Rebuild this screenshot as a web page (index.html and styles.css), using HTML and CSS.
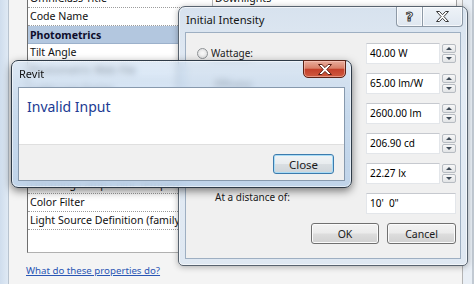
FILE: index.html
```html
<!DOCTYPE html>
<html>
<head>
<meta charset="utf-8">
<link rel="stylesheet" href="styles.css">
</head>
<body>
<div class="app">
  <div class="side"></div>
  <div class="panel">
    <div class="grid">
      <div class="row"><div class="name">OmniClass Title</div><div class="val">Downlights</div></div>
      <div class="row"><div class="name">Code Name</div><div class="val"></div></div>
      <div class="group">Photometrics</div>
      <div class="row"><div class="name">Tilt Angle</div><div class="val"></div></div>
      <div class="row tall"><div class="name">Photometric Web File</div><div class="val"></div></div>
      <div class="row tall"><div class="name">Light Loss Factor</div><div class="val"></div></div>
      <div class="row tall"><div class="name">Initial Intensity</div><div class="val"></div></div>
      <div class="row tall"><div class="name">Initial Color</div><div class="val"></div></div>
      <div class="row tall"><div class="name">Light Source Symbol Size</div><div class="val"></div></div>
      <div class="row tall"><div class="name">Emit from Line Length</div><div class="val"></div></div>
      <div class="row"><div class="name">Dimming Lamp Color Temperature Shift</div><div class="val"></div></div>
      <div class="row"><div class="name">Color Filter</div><div class="val"></div></div>
      <div class="row"><div class="name">Light Source Definition (family)</div><div class="val"></div></div>
      <div class="row empty"></div>
    </div>
    <a class="help" href="#">What do these properties do?</a>
  </div>
  <div class="rframe"></div>
</div>

<div class="win intensity">
  <div class="tbar">
    <span class="title">Initial Intensity</span>
    <div class="capbtns">
      <span class="cb help-btn">?</span>
      <span class="cb x-btn"><svg width="13" height="11" viewBox="0 0 13 11"><path d="M0.5 0.5h3l3 3.2 3-3.2h3l-4.6 5 4.6 5h-3l-3-3.2-3 3.2h-3l4.6-5z" fill="#fff" stroke="#3a3a3a" stroke-width="1"/></svg></span>
    </div>
  </div>
  <div class="client">
    <div class="frow">
      <div class="lab"><span class="radio"></span><span class="focus">Wattage:</span></div>
      <div class="inp">40.00 W</div>
      <div class="spin"><span class="sb up"></span><span class="sb dn"></span></div>
    </div>
    <div class="frow">
      <div class="lab ind">Efficacy:</div>
      <div class="inp">65.00 lm/W</div>
      <div class="spin"><span class="sb up"></span><span class="sb dn"></span></div>
    </div>
    <div class="frow">
      <div class="lab"><span class="radio"></span>Luminous Flux:</div>
      <div class="inp">2600.00 lm</div>
      <div class="spin"><span class="sb up"></span><span class="sb dn"></span></div>
    </div>
    <div class="frow">
      <div class="lab"><span class="radio"></span>Luminous Intensity:</div>
      <div class="inp">206.90 cd</div>
      <div class="spin"><span class="sb up"></span><span class="sb dn"></span></div>
    </div>
    <div class="frow">
      <div class="lab"><span class="radio"></span>Illuminance:</div>
      <div class="inp">22.27 lx</div>
      <div class="spin"><span class="sb up"></span><span class="sb dn"></span></div>
    </div>
    <div class="frow dist">
      <div class="lab ind top">At a distance of:</div>
      <div class="inp wide">10'&nbsp; 0"</div>
    </div>
    <div class="btns">
      <span class="btn">OK</span>
      <span class="btn cancel">Cancel</span>
    </div>
  </div>
</div>

<div class="win revit">
  <div class="tbar">
    <span class="title">Revit</span>
    <span class="redx"><svg width="14" height="11" viewBox="0 0 14 11"><path d="M0.5 0.5h3.4l3.1 3.1 3.1-3.1h3.4l-4.7 5 4.7 5h-3.4l-3.1-3.1-3.1 3.1h-3.4l4.7-5z" fill="#fff" stroke="#5a1d12" stroke-width="1"/></svg></span>
  </div>
  <div class="client">
    <div class="msg">Invalid Input</div>
    <div class="foot"><span class="btn def">Close</span></div>
  </div>
</div>
</body>
</html>
```

FILE: styles.css
```css
* { box-sizing: border-box; margin: 0; padding: 0; }
html, body { width: 474px; height: 284px; overflow: hidden; }
body {
  font-family: "Noto Sans", "Open Sans", sans-serif;
  font-size: 11px;
  color: #000;
  background: #f0f0f0;
  position: relative;
}

/* background property window */
.app { display: flex; height: 284px; }
.side {
  width: 9px;
  background: linear-gradient(90deg, #cfdded, #dfe9f4);
  border-right: 1px solid #b8c3cf;
}
.panel {
  flex: 1;
  background: #f4f4f4;
  padding-left: 18px;
  padding-right: 5px;
  border-right: 1px solid #b4b4b4;
  display: flex;
  flex-direction: column;
}
.rframe {
  width: 11px;
  background: #e9eff6;
  border-right: 2px solid #c2cad3;
}
.grid {
  margin-top: -10px;
  background: #fff;
  border-left: 1px solid #6e6e6e;
  border-right: 1px solid #a3a3a3;
  border-bottom: 1px solid #b0b0b0;
}
.row {
  display: flex;
  height: 18px;
  border-bottom: 1px dotted #9c9c9c;
}
.row.tall { height: 19px; }
.row.empty { height: 22px; border-bottom: none; }
.name {
  width: 185px;
  border-right: 1px solid #b8b8b8;
  padding-left: 2px;
  line-height: 17px;
  font-size: 10.6px;
  white-space: nowrap;
  overflow: hidden;
  color: #111;
}
.val { flex: 1; padding-left: 2px; line-height: 17px; font-size: 10.6px; color: #111; }
.group {
  height: 18px;
  background: #b3c7df;
  border-bottom: 1px solid #9cb1cb;
  font-weight: bold;
  font-size: 10.6px;
  padding-left: 2px;
  line-height: 18px;
  color: #0d0d2b;
}
.help {
  margin-top: 10px;
  margin-left: -1px;
  line-height: 16px;
  font-size: 9.7px;
  color: #2a56b4;
  text-decoration: underline;
}

/* windows */
.win {
  position: absolute;
  display: flex;
  flex-direction: column;
  border: 1px solid #58636f;
  border-radius: 7px 7px 5px 5px;
}
.tbar {
  position: relative;
  display: flex;
  align-items: center;
  padding-left: 7px;
  flex: none;
}
.title { font-size: 11px; color: #141414; }
.client {
  flex: 1;
  margin: 0 6px 6px;
  border: 1px solid #9eafc2;
  background: #f0f0f0;
  display: flex;
  flex-direction: column;
}

/* Initial Intensity */
.intensity {
  left: 178px;
  top: 6px;
  width: 290px;
  height: 260px;
  background: linear-gradient(#d7e2ee, #e4ecf5 30%, #dfe8f2);
  box-shadow: 0 1px 6px rgba(0, 0, 0, 0.3), inset 0 0 0 1px rgba(255, 255, 255, 0.6);
}
.intensity .tbar { height: 25px; }
.intensity .title { font-size: 11.2px; }
.capbtns {
  position: absolute;
  right: 4px;
  top: 0;
  display: flex;
}
.cb {
  height: 20px;
  display: flex;
  align-items: center;
  justify-content: center;
  border: 1px solid #8d99a6;
  border-top: none;
  background: linear-gradient(#eef3f8, #dfe7f0);
  box-shadow: inset 0 0 0 1px rgba(255, 255, 255, 0.7);
}
.help-btn {
  width: 27px;
  border-radius: 0 0 0 4px;
  font-family: "DejaVu Sans", sans-serif;
  font-weight: bold;
  font-size: 13px;
  color: #fff;
  -webkit-text-stroke: 1px #3a3a3a;
}
.x-btn {
  width: 40px;
  border-left: none;
  border-radius: 0 0 4px 0;
}
.intensity .client { padding: 10px 4px 0 0; }
.frow {
  display: flex;
  align-items: center;
  height: 21px;
  margin-bottom: 9px;
}
.lab {
  flex: 1;
  display: flex;
  align-items: center;
  padding-left: 11px;
  white-space: nowrap;
  font-size: 10px;
  color: #1a1a1a;
}
.lab.ind { padding-left: 29px; }
.lab.top { align-self: flex-start; margin-top: -3px; }
.radio {
  width: 11px;
  height: 11px;
  border-radius: 50%;
  border: 1px solid #8f9396;
  background: radial-gradient(circle at 50% 50%, #f6f6f6 20%, #d7d8d9);
  margin-right: 3px;
}
.focus { border-bottom: 1px dotted #555; line-height: 13px; }
.inp {
  width: 74px;
  height: 21px;
  background: #fff;
  border: 1px solid #e3e6ea;
  border-top-color: #c6c9cf;
  padding-left: 3px;
  line-height: 19px;
  font-size: 10px;
  white-space: nowrap;
}
.inp.wide { width: 90px; }
.spin {
  width: 14px;
  height: 21px;
  margin-left: 2px;
  display: flex;
  flex-direction: column;
  justify-content: space-between;
  padding: 1px 0;
}
.sb {
  height: 9px;
  border: 1px solid #b7bcc2;
  border-radius: 2px;
  background: linear-gradient(#f7f7f7, #e2e4e6);
  display: flex;
  align-items: center;
  justify-content: center;
}
.sb::after {
  content: "";
  border-left: 3px solid transparent;
  border-right: 3px solid transparent;
}
.sb.up::after { border-bottom: 3px solid #3e4a57; }
.sb.dn::after { border-top: 3px solid #3e4a57; }
.btns {
  display: flex;
  justify-content: flex-end;
  gap: 8px;
  margin-top: 0;
}
.btn {
  width: 68px;
  height: 21px;
  display: flex;
  align-items: center;
  justify-content: center;
  border: 1px solid #707070;
  border-radius: 3px;
  background: linear-gradient(#f3f3f3, #ebebeb 48%, #dddddd 52%, #d1d1d1);
  box-shadow: inset 0 0 0 1px #fbfbfb;
  font-size: 10.5px;
  color: #1a1a1a;
}
.btn.cancel { width: 69px; }

/* Revit message box */
.revit {
  left: 11px;
  top: 60px;
  width: 341px;
  height: 128px;
  border-color: #2f3b48;
  border-radius: 7px;
  background: linear-gradient(rgba(205, 223, 243, 0.6), rgba(188, 211, 235, 0.78) 40%, rgba(186, 208, 232, 0.9));
  -webkit-backdrop-filter: blur(3px);
  backdrop-filter: blur(3px);
  box-shadow: 0 3px 9px rgba(0, 0, 0, 0.5), inset 0 0 0 1px rgba(255, 255, 255, 0.55);
}
.revit .tbar { height: 26px; }
.revit .title { color: #111; margin-top: -1px; }
.redx {
  position: absolute;
  right: 5px;
  top: -1px;
  width: 43px;
  height: 18px;
  border: 1px solid #5b2216;
  border-radius: 0 0 5px 5px;
  background: linear-gradient(#e9ad9d, #d98069 45%, #c4402a 52%, #cf5a3f);
  box-shadow: inset 0 0 0 1px rgba(255, 210, 200, 0.5);
  display: flex;
  align-items: center;
  justify-content: center;
}
.revit .client { border-color: #8799ad; }
.msg {
  height: 56px;
  background: #fff;
  padding: 9px 0 0 8px;
  font-size: 14px;
  line-height: 20px;
  color: #203a93;
}
.foot {
  flex: 1;
  border-top: 1px solid #dfdfdf;
  display: flex;
  justify-content: flex-end;
  padding: 9px 10px 0 0;
}
.btn.def {
  width: 61px;
  height: 20px;
  border-color: #3d7bad;
  box-shadow: inset 0 0 0 1px #a9dcf6;
  background: linear-gradient(#f1f4f6, #e8ecef 48%, #d9dee2 52%, #cfd5da);
  font-size: 11.5px;
}
```
